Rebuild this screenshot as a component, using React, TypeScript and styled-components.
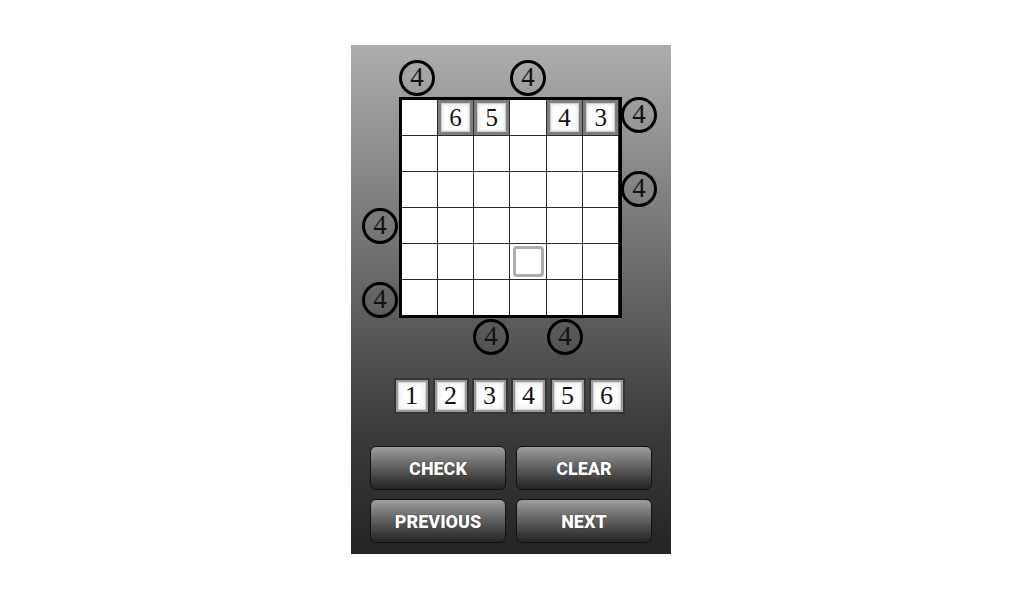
import React from 'react';
import styled, { createGlobalStyle } from 'styled-components';

const GlobalStyle = createGlobalStyle`
  html, body {
    margin: 0;
    padding: 0;
    background: #ffffff;
  }
`;

const Page = styled.div`
  display: flex;
  justify-content: center;
  padding-top: 45px;
  padding-right: 2px;
`;

const Panel = styled.div`
  width: 320px;
  height: 509px;
  box-sizing: border-box;
  padding: 14px 19px 11px;
  display: flex;
  flex-direction: column;
  align-items: center;
  background: linear-gradient(to bottom, #adadad 0%, #6a6a6a 45%, #3c3c3c 75%, #242424 100%);
`;

const Board = styled.div`
  display: grid;
  grid-template-columns: repeat(8, 37px);
  grid-template-rows: repeat(8, 37px);
  margin-left: -3px;
`;

const ClueSlot = styled.div<{ $col: number; $row: number }>`
  grid-column: ${({ $col }) => $col + 1};
  grid-row: ${({ $row }) => $row + 1};
  display: flex;
  align-items: center;
  justify-content: center;
`;

const Clue = styled.div`
  width: 30px;
  height: 30px;
  border: 3px solid #000;
  border-radius: 50%;
  display: flex;
  align-items: center;
  justify-content: center;
  font-family: "Liberation Serif", "DejaVu Serif", serif;
  font-size: 27px;
  color: #111;
  line-height: 1;
`;

const Grid = styled.div`
  grid-column: 2 / 8;
  grid-row: 2 / 8;
  display: grid;
  grid-template-columns: repeat(6, 1fr);
  grid-template-rows: repeat(6, 1fr);
  gap: 1px;
  border: 3px solid #000;
  background: #2a2a2a;
  margin-top: 1px;
  margin-right: -1px;
`;

const Cell = styled.div<{ $given?: boolean }>`
  background: #ffffff;
  display: flex;
  align-items: center;
  justify-content: center;
  box-sizing: border-box;
  font-family: "Liberation Serif", "DejaVu Serif", serif;
  font-size: 25px;
  color: #111;
  ${({ $given }) =>
    $given &&
    `
    border: 3px solid #7e7e7e;
    box-shadow: inset 0 0 0 1px #cfcfcf, inset 0 0 4px #bdbdbd;
  `}
`;

const SelectRing = styled.div`
  width: 31px;
  height: 31px;
  box-sizing: border-box;
  border: 3.5px solid #adadad;
  border-radius: 4px;
`;

const Palette = styled.div`
  margin-top: 23px;
  display: flex;
  gap: 3px;
  margin-left: -4px;
`;

const Tile = styled.div`
  width: 36px;
  height: 36px;
  box-sizing: border-box;
  border: 2px solid #353535;
  background: #fff;
  box-shadow: inset 0 0 0 2px #9a9a9a, inset 0 0 0 3px #d8d8d8, inset 0 0 6px 3px #e6e6e6;
  display: flex;
  align-items: center;
  justify-content: center;
  font-family: "Liberation Serif", "DejaVu Serif", serif;
  font-size: 26px;
  color: #111;
`;

const Buttons = styled.div`
  margin-top: 32px;
  display: grid;
  grid-template-columns: repeat(2, 136px);
  grid-auto-rows: 44px;
  column-gap: 10px;
  row-gap: 9px;
`;

const Button = styled.button`
  border: 1px solid #111;
  border-radius: 6px;
  background: linear-gradient(to bottom, #9e9e9e 0%, #6a6a6a 40%, #3a3a3a 80%, #262626 100%);
  color: #fff;
  font-family: Roboto, "Liberation Sans", sans-serif;
  font-weight: 900;
  font-size: 18px;
  text-transform: uppercase;
  text-shadow: 0 0 1px #000;
  padding: 0;
  cursor: pointer;
`;

const givens: Record<string, string> = {
  '0-1': '6',
  '0-2': '5',
  '0-4': '4',
  '0-5': '3',
};

const clues: { col: number; row: number; value: string }[] = [
  { col: 1, row: 0, value: '4' },
  { col: 4, row: 0, value: '4' },
  { col: 7, row: 1, value: '4' },
  { col: 7, row: 3, value: '4' },
  { col: 0, row: 4, value: '4' },
  { col: 0, row: 6, value: '4' },
  { col: 3, row: 7, value: '4' },
  { col: 5, row: 7, value: '4' },
];

export default function App() {
  const cells = [];
  for (let r = 0; r < 6; r++) {
    for (let c = 0; c < 6; c++) {
      const key = `${r}-${c}`;
      const value = givens[key];
      const selected = r === 4 && c === 3;
      cells.push(
        <Cell key={key} $given={!!value}>
          {value}
          {selected && <SelectRing />}
        </Cell>
      );
    }
  }

  return (
    <>
      <GlobalStyle />
      <Page>
        <Panel>
          <Board>
            {clues.map((clue) => (
              <ClueSlot key={`${clue.col}-${clue.row}`} $col={clue.col} $row={clue.row}>
                <Clue>{clue.value}</Clue>
              </ClueSlot>
            ))}
            <Grid>{cells}</Grid>
          </Board>
          <Palette>
            {['1', '2', '3', '4', '5', '6'].map((n) => (
              <Tile key={n}>{n}</Tile>
            ))}
          </Palette>
          <Buttons>
            <Button>Check</Button>
            <Button>Clear</Button>
            <Button>Previous</Button>
            <Button>Next</Button>
          </Buttons>
        </Panel>
      </Page>
    </>
  );
}
